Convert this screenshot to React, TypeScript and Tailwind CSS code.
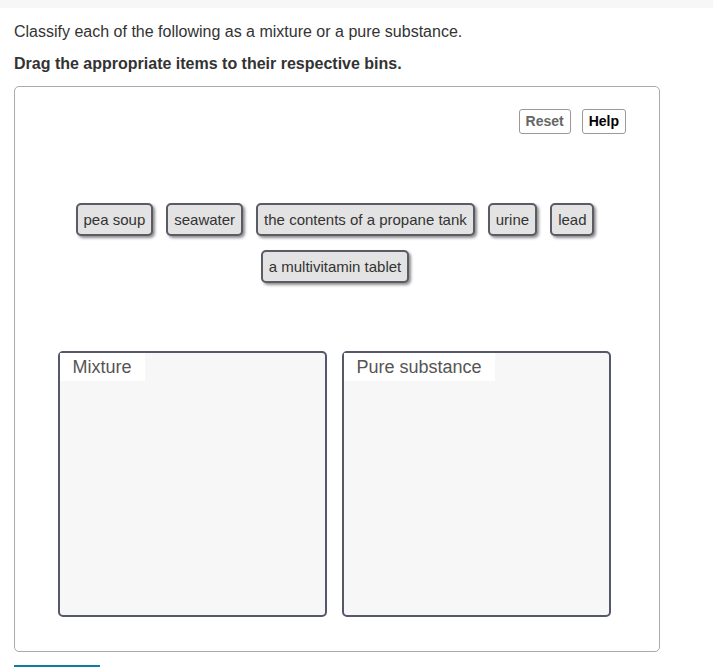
const items = [
  "pea soup",
  "seawater",
  "the contents of a propane tank",
  "urine",
  "lead",
  "a multivitamin tablet",
];

const bins = ["Mixture", "Pure substance"];

function Chip({ label }: { label: string }) {
  return (
    <div className="rounded-[5px] border-2 border-[#5b5b66] bg-[#e3e3e3] px-[6px] py-[6px] text-[15px] leading-[17px] text-[#333] shadow-[2px_2px_3px_rgba(0,0,0,0.45)]">
      {label}
    </div>
  );
}

function Bin({ title }: { title: string }) {
  return (
    <div className="h-[266px] w-[269px] rounded-[5px] border-2 border-[#55586a] bg-[#f7f7f7]">
      <div className="inline-block bg-white px-[13px] text-[18px] leading-[28px] text-[#555]">
        {title}
      </div>
    </div>
  );
}

export default function App() {
  return (
    <div className="min-h-[667px] bg-white font-['Liberation_Sans',Arial,sans-serif] text-[#333]">
      <div className="h-[8px] bg-[#f7f7f7]" />
      <div className="px-[14px]">
        <p className="mt-[14px] text-[16px] leading-[20px]">
          Classify each of the following as a mixture or a pure substance.
        </p>
        <p className="mt-[12px] text-[16px] font-bold leading-[20px]">
          Drag the appropriate items to their respective bins.
        </p>
        <div className="mt-[12px] w-[646px] rounded-[5px] border border-[#aaa] pb-[34px] pt-[22px]">
          <div className="flex justify-end gap-[11px] pr-[33px]">
            <button className="h-[25px] rounded-[3px] border border-[#999] px-[6px] text-[14px] font-bold text-[#666]">
              Reset
            </button>
            <button className="h-[25px] rounded-[3px] border border-[#999] px-[6px] text-[14px] font-bold text-black">
              Help
            </button>
          </div>
          <div className="mx-auto mt-[69px] flex w-[580px] flex-wrap justify-center gap-x-[13px] gap-y-[14px] pr-[4px]">
            {items.map((it) => (
              <Chip key={it} label={it} />
            ))}
          </div>
          <div className="mt-[68px] flex justify-center gap-[15px] pr-[6px]">
            {bins.map((b) => (
              <Bin key={b} title={b} />
            ))}
          </div>
        </div>
        <div className="mt-[13px] h-[3px] w-[86px] bg-[#0a7fa3]" />
      </div>
    </div>
  );
}
